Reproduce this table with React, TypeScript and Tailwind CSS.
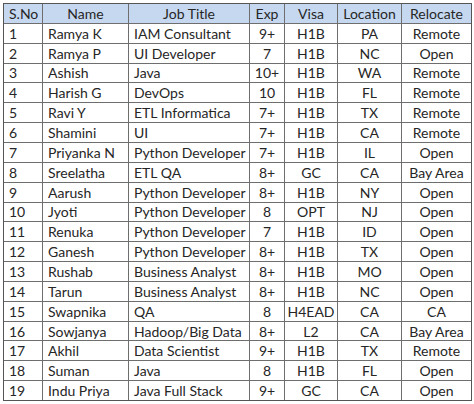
import React from 'react';

type Row = [string, string, string, string, string, string, string];

const rows: Row[] = [
  ['1', 'Ramya K', 'IAM Consultant', '9+', 'H1B', 'PA', 'Remote'],
  ['2', 'Ramya P', 'UI Developer', '7', 'H1B', 'NC', 'Open'],
  ['3', 'Ashish', 'Java', '10+', 'H1B', 'WA', 'Remote'],
  ['4', 'Harish G', 'DevOps', '10', 'H1B', 'FL', 'Remote'],
  ['5', 'Ravi Y', 'ETL Informatica', '7+', 'H1B', 'TX', 'Remote'],
  ['6', 'Shamini', 'UI', '7+', 'H1B', 'CA', 'Remote'],
  ['7', 'Priyanka N', 'Python Developer', '7+', 'H1B', 'IL', 'Open'],
  ['8', 'Sreelatha', 'ETL QA', '8+', 'GC', 'CA', 'Bay Area'],
  ['9', 'Aarush', 'Python Developer', '8+', 'H1B', 'NY', 'Open'],
  ['10', 'Jyoti', 'Python Developer', '8', 'OPT', 'NJ', 'Open'],
  ['11', 'Renuka', 'Python Developer', '7', 'H1B', 'ID', 'Open'],
  ['12', 'Ganesh', 'Python Developer', '8+', 'H1B', 'TX', 'Open'],
  ['13', 'Rushab', 'Business Analyst', '8+', 'H1B', 'MO', 'Open'],
  ['14', 'Tarun', 'Business Analyst', '8+', 'H1B', 'NC', 'Open'],
  ['15', 'Swapnika', 'QA', '8', 'H4EAD', 'CA', 'CA'],
  ['16', 'Sowjanya', 'Hadoop/Big Data', '8+', 'L2', 'CA', 'Bay Area'],
  ['17', 'Akhil', 'Data Scientist', '9+', 'H1B', 'TX', 'Remote'],
  ['18', 'Suman', 'Java', '8', 'H1B', 'FL', 'Open'],
  ['19', 'Indu Priya', 'Java Full Stack', '9+', 'GC', 'CA', 'Open'],
];

const headers = ['S.No', 'Name', 'Job Title', 'Exp', 'Visa', 'Location', 'Relocate'];

// first three data columns are left aligned, the rest centred
const align = (i: number) => (i < 3 ? 'justify-start pl-[5px]' : 'justify-center');

export default function App() {
  return (
    <div className="w-[474px] h-[404px] bg-white pt-[3px] pl-[3px]" style={{ fontFamily: 'Lato, "Open Sans", sans-serif' }}>
      <div className="grid grid-cols-[38px_85px_120px_34px_52px_63px_69px] grid-rows-[repeat(20,minmax(0,1fr))] gap-px w-[469px] h-[398px] border border-[#555] bg-[#6e6e6e] text-[14px] text-[#262626]">
        {headers.map((h, i) => (
          <div
            key={h}
            className={`flex items-center bg-[#c5d8f0] ${i === 0 ? 'justify-start pl-[5px]' : 'justify-center'}`}
          >
            {h}
          </div>
        ))}
        {rows.map((r) =>
          r.map((c, i) => (
            <div key={r[0] + '-' + i} className={`flex items-center bg-white whitespace-nowrap ${align(i)}`}>
              {c}
            </div>
          ))
        )}
      </div>
    </div>
  );
}
